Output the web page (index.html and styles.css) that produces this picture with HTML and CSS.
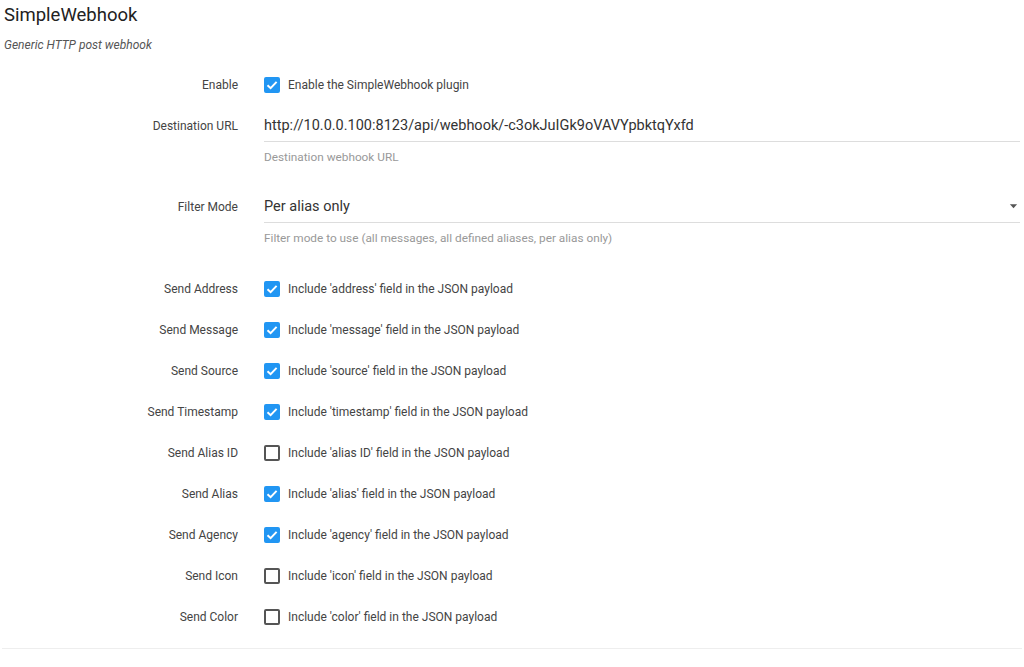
FILE: index.html
```html
<!DOCTYPE html>
<html>
<head>
<meta charset="utf-8">
<link rel="stylesheet" href="styles.css">
</head>
<body>
<div class="page">
  <header class="head">
    <h1 class="title">SimpleWebhook</h1>
    <p class="subtitle">Generic HTTP post webhook</p>
  </header>
  <form class="form">
    <div class="row check-row">
      <label class="label">Enable</label>
      <div class="control"><span class="box on"><svg viewBox="0 0 16 16"><path d="M3.5 8.3 L6.6 11.2 L12.6 4.9" /></svg></span><span class="ctext">Enable the SimpleWebhook plugin</span></div>
    </div>
    <div class="row field-row first">
      <label class="label">Destination URL</label>
      <div class="field">
        <div class="input">http://10.0.0.100:8123/api/webhook/-c3okJuIGk9oVAVYpbktqYxfd</div>
        <div class="hint">Destination webhook URL</div>
      </div>
    </div>
    <div class="row field-row second">
      <label class="label">Filter Mode</label>
      <div class="field">
        <div class="input select"><span>Per alias only</span><svg class="caret" viewBox="0 0 10 5"><path d="M1 0 H9 L5 4.5 Z"/></svg></div>
        <div class="hint">Filter mode to use (all messages, all defined aliases, per alias only)</div>
      </div>
    </div>
    <div class="checks">
      <div class="row check-row">
        <label class="label">Send Address</label>
        <div class="control"><span class="box on"><svg viewBox="0 0 16 16"><path d="M3.5 8.3 L6.6 11.2 L12.6 4.9" /></svg></span><span class="ctext">Include 'address' field in the JSON payload</span></div>
      </div>
      <div class="row check-row">
        <label class="label">Send Message</label>
        <div class="control"><span class="box on"><svg viewBox="0 0 16 16"><path d="M3.5 8.3 L6.6 11.2 L12.6 4.9" /></svg></span><span class="ctext">Include 'message' field in the JSON payload</span></div>
      </div>
      <div class="row check-row">
        <label class="label">Send Source</label>
        <div class="control"><span class="box on"><svg viewBox="0 0 16 16"><path d="M3.5 8.3 L6.6 11.2 L12.6 4.9" /></svg></span><span class="ctext">Include 'source' field in the JSON payload</span></div>
      </div>
      <div class="row check-row">
        <label class="label">Send Timestamp</label>
        <div class="control"><span class="box on"><svg viewBox="0 0 16 16"><path d="M3.5 8.3 L6.6 11.2 L12.6 4.9" /></svg></span><span class="ctext">Include 'timestamp' field in the JSON payload</span></div>
      </div>
      <div class="row check-row">
        <label class="label">Send Alias ID</label>
        <div class="control"><span class="box"></span><span class="ctext">Include 'alias ID' field in the JSON payload</span></div>
      </div>
      <div class="row check-row">
        <label class="label">Send Alias</label>
        <div class="control"><span class="box on"><svg viewBox="0 0 16 16"><path d="M3.5 8.3 L6.6 11.2 L12.6 4.9" /></svg></span><span class="ctext">Include 'alias' field in the JSON payload</span></div>
      </div>
      <div class="row check-row">
        <label class="label">Send Agency</label>
        <div class="control"><span class="box on"><svg viewBox="0 0 16 16"><path d="M3.5 8.3 L6.6 11.2 L12.6 4.9" /></svg></span><span class="ctext">Include 'agency' field in the JSON payload</span></div>
      </div>
      <div class="row check-row">
        <label class="label">Send Icon</label>
        <div class="control"><span class="box"></span><span class="ctext">Include 'icon' field in the JSON payload</span></div>
      </div>
      <div class="row check-row">
        <label class="label">Send Color</label>
        <div class="control"><span class="box"></span><span class="ctext">Include 'color' field in the JSON payload</span></div>
      </div>
    </div>
  </form>
  <div class="divider"></div>
</div>
</body>
</html>
```

FILE: styles.css
```css
* { box-sizing: border-box; }
html, body { margin: 0; padding: 0; background: #fff; }
body {
  font-family: Roboto, "Liberation Sans", Arial, sans-serif;
  color: #333;
}
.page { padding: 0 2px; }
.head { padding-left: 2px; }
.title {
  margin: 0;
  font-size: 18.5px;
  font-weight: 400;
  line-height: 30px;
  color: #222;
}
.subtitle {
  margin: 5px 0 0;
  font-size: 12px;
  font-style: italic;
  line-height: 20px;
  color: #555;
}
.form { display: flex; flex-direction: column; margin-top: 9px; }
.row {
  display: grid;
  grid-template-columns: 236px 1fr;
  column-gap: 26px;
}
.label {
  text-align: right;
  font-size: 12px;
  color: #444;
}
.check-row { height: 41px; align-items: center; }
.control { display: flex; align-items: center; gap: 8px; }
.box {
  width: 16px; height: 16px;
  border: 2px solid #555;
  border-radius: 2px;
  display: inline-flex;
  flex: none;
}
.box.on {
  background: #2196f3;
  border-color: #2196f3;
  padding: 0;
  align-items: center;
  justify-content: center;
}
.box.on svg { width: 16px; height: 16px; flex: none; }
.box svg path { fill: none; stroke: #fff; stroke-width: 2; }
.ctext { font-size: 12px; color: #444; }
.field-row .label { line-height: 30px; }
.field-row.first { padding-top: 6px; }
.field-row.second { padding-top: 27px; }
.field { padding-right: 2px; }
.input {
  height: 31px;
  line-height: 30px;
  font-size: 14.5px;
  color: #333;
  border-bottom: 1px solid #ddd;
}
.select { display: flex; justify-content: space-between; align-items: center; }
.caret { width: 9px; height: 5px; fill: #555; margin-right: 2px; margin-top: -2px; }
.hint {
  margin-top: 7px;
  font-size: 11.8px;
  line-height: 16px;
  color: #999;
}
.checks { margin-top: 22px; display: flex; flex-direction: column; }
.divider { margin-top: 11px; border-top: 1px solid #eee; }
```
